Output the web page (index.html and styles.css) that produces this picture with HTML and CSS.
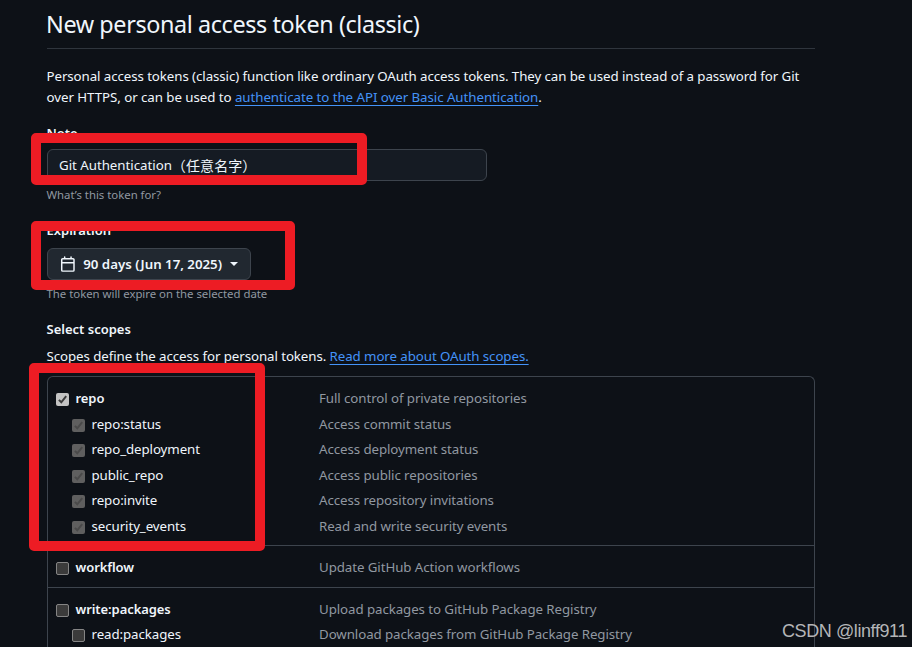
FILE: index.html
```html
<!DOCTYPE html>
<html lang="en">
<head>
  <meta charset="UTF-8">
  <meta name="viewport" content="width=device-width, initial-scale=1.0">
  <title>New personal access token (classic)</title>
  <link rel="stylesheet" href="styles.css">
</head>
<body>
  <svg width="0" height="0" class="sprite">
    <symbol id="tick" viewBox="0 0 13 13">
      <path d="M2.9 6.9 5.3 9.3 10.2 3.2" fill="none" stroke="currentColor" stroke-width="2"></path>
    </symbol>
  </svg>

  <main class="container">
    <h1 class="title">New personal access token (classic)</h1>

    <p class="intro">
      Personal access tokens (classic) function like ordinary OAuth access tokens. They can be used instead of a password for Git<br>
      <span class="intro-more">over HTTPS, or can be used to <a href="#">authenticate to the API over Basic Authentication</a>.</span>
    </p>

    <div class="form-group note">
      <label class="label">Note</label>
      <div class="input"><span>Git Authentication</span><span class="cjk">（任意名字）</span></div>
      <div class="hint">What’s this token for?</div>
    </div>

    <div class="form-group expiration">
      <label class="label">Expiration</label>
      <button class="btn" type="button">
        <svg width="16" height="16" viewBox="0 0 16 16" fill="currentColor">
          <path d="M4.75 0a.75.75 0 0 1 .75.75V2h5V.75a.75.75 0 0 1 1.5 0V2h1.25c.966 0 1.75.784 1.75 1.75v10.5A1.75 1.75 0 0 1 13.25 16H2.75A1.75 1.75 0 0 1 1 14.25V3.75C1 2.784 1.784 2 2.75 2H4V.75A.75.75 0 0 1 4.75 0ZM2.5 7.5v6.75c0 .138.112.25.25.25h10.5a.25.25 0 0 0 .25-.25V7.5Zm10.75-4H2.75a.25.25 0 0 0-.25.25V6h11V3.75a.25.25 0 0 0-.25-.25Z"></path>
        </svg>
        <span>90 days (Jun 17, 2025)</span>
        <i class="caret"></i>
      </button>
      <div class="hint date-hint">The token will expire on the selected date</div>
    </div>

    <h2 class="label scopes-title">Select scopes</h2>
    <p class="scopes-text">Scopes define the access for personal tokens. <a href="#">Read more about OAuth scopes.</a></p>

    <ul class="scopes">
      <li class="scope">
        <div class="row"><span class="check checked"><svg><use href="#tick"></use></svg></span><b class="name">repo</b><span class="desc">Full control of private repositories</span></div>
        <div class="row child"><span class="check disabled"><svg><use href="#tick"></use></svg></span><span class="name">repo:status</span><span class="desc">Access commit status</span></div>
        <div class="row child"><span class="check disabled"><svg><use href="#tick"></use></svg></span><span class="name">repo_deployment</span><span class="desc">Access deployment status</span></div>
        <div class="row child"><span class="check disabled"><svg><use href="#tick"></use></svg></span><span class="name">public_repo</span><span class="desc">Access public repositories</span></div>
        <div class="row child"><span class="check disabled"><svg><use href="#tick"></use></svg></span><span class="name">repo:invite</span><span class="desc">Access repository invitations</span></div>
        <div class="row child"><span class="check disabled"><svg><use href="#tick"></use></svg></span><span class="name">security_events</span><span class="desc">Read and write security events</span></div>
      </li>
      <li class="scope">
        <div class="row"><span class="check"></span><b class="name">workflow</b><span class="desc">Update GitHub Action workflows</span></div>
      </li>
      <li class="scope">
        <div class="row"><span class="check"></span><b class="name">write:packages</b><span class="desc">Upload packages to GitHub Package Registry</span></div>
        <div class="row child"><span class="check"></span><span class="name">read:packages</span><span class="desc">Download packages from GitHub Package Registry</span></div>
      </li>
    </ul>
  </main>

  <!-- highlight frames -->
  <div class="mark mark-note"></div>
  <div class="mark mark-expiration"></div>
  <div class="mark mark-repo"></div>
  <div class="watermark">CSDN @linff911</div>
</body>
</html>
```

FILE: styles.css
```css
* {
  box-sizing: border-box;
  margin: 0;
  padding: 0;
}

body {
  position: relative;
  height: 647px;
  overflow: hidden;
  background-color: #0d1117;
  color: #f0f6fc;
  font-family: 'Noto Sans', 'Noto Sans CJK SC', sans-serif;
  font-size: 13.3px;
  letter-spacing: -0.08px;
  line-height: 21px;
  white-space: nowrap;
}

.sprite {
  position: absolute;
}

.container {
  width: 768px;
  margin-left: 47px;
}

.title {
  height: 49px;
  padding-top: 6px;
  border-bottom: 1px solid #2f353d;
  font-size: 23.4px;
  font-weight: 400;
  letter-spacing: -0.4px;
  line-height: 36px;
  text-indent: -1px;
}

.intro {
  margin-top: 17px;
  margin-left: -0.5px;
}

.intro-more {
  letter-spacing: -0.05px;
}

a {
  color: #4493f8;
  text-decoration: underline;
  text-underline-offset: 3px;
}

.label {
  display: block;
  margin-left: -0.5px;
  font-size: 13px;
  font-weight: 600;
  letter-spacing: 0;
  line-height: 21px;
}

.note {
  margin-top: 15px;
}

.input {
  display: flex;
  align-items: center;
  width: 440px;
  height: 32px;
  margin-top: 5px;
  padding: 0 11px;
  border: 1px solid #3d444d;
  border-radius: 6px;
  background-color: #151b23;
  letter-spacing: -0.03px;
}

.cjk {
  font-size: 14px;
  letter-spacing: 0.1px;
}

.hint {
  margin-top: 5px;
  margin-left: -0.5px;
  color: #9198a1;
  font-size: 11.4px;
  letter-spacing: -0.02px;
  line-height: 18px;
}

.expiration {
  margin-top: 16px;
}

.btn {
  display: flex;
  align-items: center;
  width: 204px;
  height: 32px;
  margin-top: 7px;
  padding: 0 12px;
  border: 1px solid #3d444d;
  border-radius: 6px;
  background-color: #212830;
  color: #f0f6fc;
  font-family: inherit;
  font-size: 13.3px;
  font-weight: 600;
  letter-spacing: -0.02px;
}

.btn svg {
  margin-right: 7.5px;
}

.caret {
  margin-left: 8px;
  border: 4px solid transparent;
  border-top-color: currentColor;
  border-bottom: 0;
}

.scopes-title {
  margin-top: 16px;
}

.scopes-text {
  margin-top: 6px;
  margin-left: -0.5px;
  letter-spacing: -0.08px;
}

.scopes {
  margin-top: 9px;
  border: 1px solid #3d444d;
  border-bottom: 0;
  border-radius: 6px 6px 0 0;
  list-style: none;
}

.scope {
  padding: 9px 8px 6.5px;
}

.scope:first-child {
  padding-bottom: 6px;
}

.scope + .scope {
  padding-top: 9px;
  border-top: 1px solid #3d444d;
}

.row {
  display: flex;
  align-items: center;
  height: 25.5px;
}

.scope:last-child .row {
  height: 25px;
}

.check {
  width: 13px;
  height: 13px;
  margin: 2px 6.5px 0 0;
  border: 1px solid #858585;
  border-radius: 2px;
  background-color: #3b3b3b;
}

.check svg {
  display: block;
  width: 13px;
  height: 13px;
}

.checked {
  border: 0;
  background-color: #c3c3c3;
  color: #3b3b3b;
}

.disabled {
  border: 0;
  background-color: #5f5f5f;
  color: #4a4a4a;
}

.name {
  width: 243.5px;
}

b.name {
  font-size: 13px;
  font-weight: 600;
}

.child {
  padding-left: 16px;
}

.child .name {
  width: 227.5px;
}

.desc {
  color: #9198a1;
}

.mark {
  position: absolute;
  border: 10px solid #ed1c24;
  border-radius: 5px;
}

.mark-note {
  top: 133px;
  left: 31px;
  width: 336px;
  height: 52px;
}

.mark-expiration {
  top: 221px;
  left: 31px;
  width: 264px;
  height: 69px;
}

.mark-repo {
  top: 363px;
  left: 29px;
  width: 236px;
  height: 188px;
}

.watermark {
  position: absolute;
  right: 5px;
  bottom: 5px;
  color: #b4b5b7;
  font-family: 'Liberation Sans', sans-serif;
  font-size: 18px;
  letter-spacing: -0.4px;
}
```
